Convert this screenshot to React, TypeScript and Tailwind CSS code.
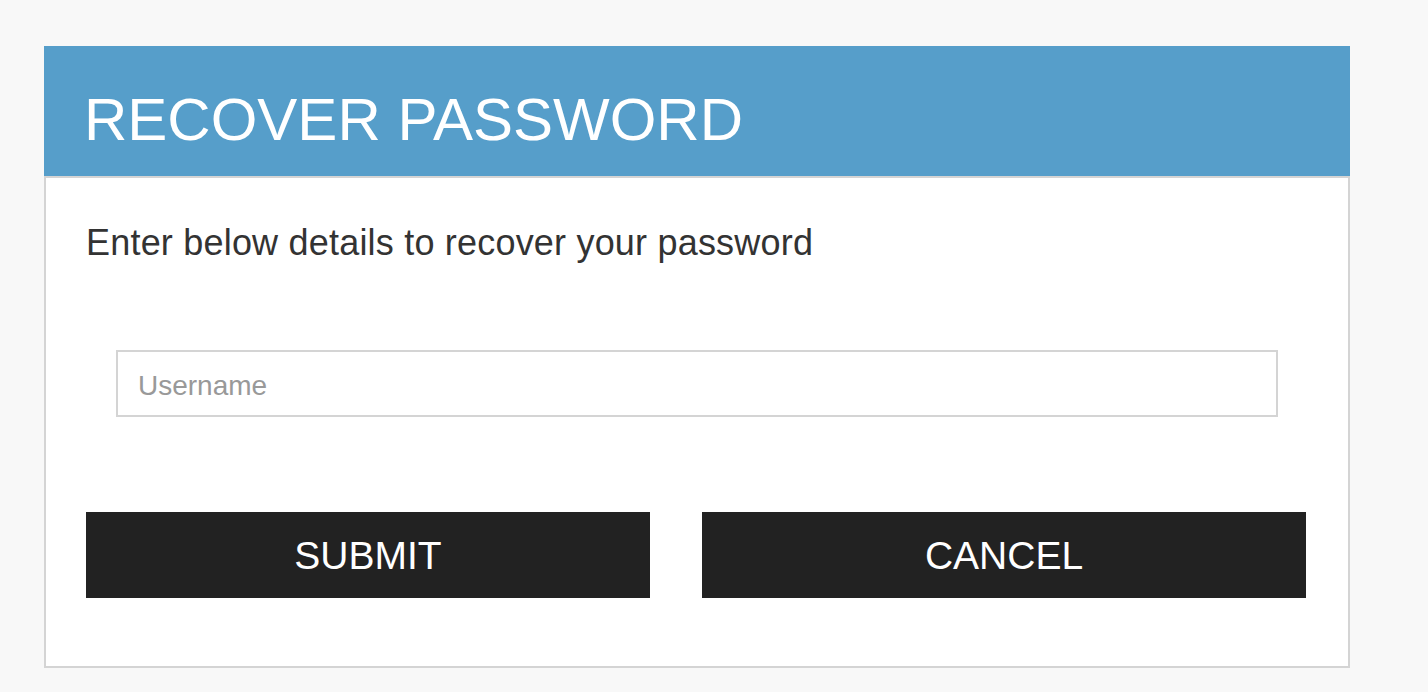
const App = () => {
  return (
    <div
      className="min-h-screen w-full bg-[#f8f8f8] pt-[46px] pl-[44px]"
      style={{ fontFamily: '"Liberation Sans", Arial, sans-serif' }}
    >
      <div className="w-[1306px]">
        {/* Header */}
        <div className="h-[130px] bg-[#569eca] pl-[40px] pt-[44px]">
          <h1 className="text-[60px] leading-none font-normal text-white">RECOVER PASSWORD</h1>
        </div>

        {/* Body */}
        <div className="border-2 border-[#d4d4d4] bg-white pl-[40px] pr-[42px] pt-[47px] pb-[68px]">
          <p className="text-[36px] leading-none tracking-[0.2px] text-[#333333]">
            Enter below details to recover your password
          </p>

          <div className="mt-[89px] pl-[30px] pr-[28px]">
            <input
              type="text"
              placeholder="Username"
              className="h-[67px] w-full border-2 border-[#d4d4d4] bg-white pl-[20px] pt-[4px] text-[28px] text-[#333333] outline-none placeholder:text-[#999999]"
            />
          </div>

          <div className="mt-[95px] flex justify-between">
            <button className="flex h-[86px] w-[564px] items-center justify-center bg-[#222222] text-[39px] leading-none text-white">
              SUBMIT
            </button>
            <button className="flex h-[86px] w-[604px] items-center justify-center bg-[#222222] text-[39px] leading-none text-white">
              CANCEL
            </button>
          </div>
        </div>
      </div>
    </div>
  );
};

export default App;
